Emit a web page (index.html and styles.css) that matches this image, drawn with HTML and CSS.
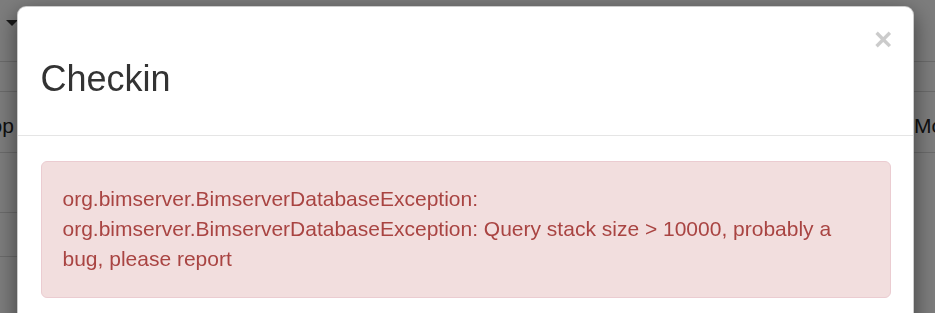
FILE: index.html
```html
<!DOCTYPE html>
<html lang="en">
<head>
  <meta charset="UTF-8" />
  <meta name="viewport" content="width=device-width, initial-scale=1.0"/>
  <title>Checkin - BIMserver</title>
  <link rel="stylesheet" href="styles.css">
</head>
<body>
  <div class="page">
    <div class="topbar">
      <span class="caret"></span>
    </div>
    <div class="subbar"></div>
    <div class="head-row">
      <div class="cell-left">Top</div>
      <div class="cell-right">Modified</div>
    </div>
    <div class="side-rows">
      <div class="side-row"></div>
      <div class="side-row short"></div>
    </div>
  </div>

  <div class="backdrop"></div>

  <div class="modal">
    <div class="modal-header">
      <h3 class="modal-title">Checkin</h3>
      <button class="close" type="button">&times;</button>
    </div>
    <div class="modal-body">
      <div class="alert alert-danger">
        org.bimserver.BimserverDatabaseException: org.bimserver.BimserverDatabaseException: Query stack size &gt; 10000, probably a bug, please report
      </div>
    </div>
  </div>
</body>
</html>
```

FILE: styles.css
```css
html, body {
  margin: 0;
  padding: 0;
  height: 100%;
  overflow: hidden;
}

body {
  font-family: 'Liberation Sans', Arial, sans-serif;
  font-size: 21px;
  line-height: 30px;
  color: #333;
  background-color: #fafafa;
}

/* page under the backdrop */
.topbar {
  height: 61.5px;
  border-bottom: 1.5px solid #d6d6d6;
  padding: 20px 0 0 6px;
  box-sizing: border-box;
}

.caret {
  display: block;
  width: 0;
  height: 0;
  border-top: 6px solid #333;
  border-left: 6px solid transparent;
  border-right: 6px solid transparent;
}

.subbar {
  height: 29.5px;
  border-bottom: 1.5px solid #d6d6d6;
}

.head-row {
  display: flex;
  height: 61px;
  border-bottom: 1.5px solid #d6d6d6;
  padding-top: 19px;
  box-sizing: border-box;
  color: #222;
}

.cell-left {
  flex: 0 0 914px;
  text-indent: -20px;
}

.cell-right {
  flex: 1;
  white-space: nowrap;
}

.side-rows {
  width: 300px;
}

.side-row {
  height: 58.5px;
  border-bottom: 1.5px solid #d6d6d6;
}

.side-row.short {
  height: 43.5px;
}

.backdrop {
  position: fixed;
  inset: 0;
  background-color: rgba(0, 0, 0, 0.5);
}

/* modal */
.modal {
  position: absolute;
  top: 6px;
  left: 17px;
  width: 897px;
  box-sizing: border-box;
  background-color: #fff;
  border: 1.5px solid rgba(0, 0, 0, 0.2);
  border-radius: 9px;
  box-shadow: 0 7.5px 22.5px rgba(0, 0, 0, 0.5);
}

.modal-header {
  display: flex;
  align-items: flex-start;
  padding: 22.5px;
  border-bottom: 1.5px solid #e5e5e5;
}

.modal-title {
  flex: 1;
  margin: 23.5px 0 8.5px;
  font-size: 36px;
  line-height: 51px;
  font-weight: normal;
  color: #333;
}

.close {
  margin: -6px -2px 0 0;
  padding: 0;
  background: transparent;
  border: 0;
  font-family: 'Liberation Sans', Arial, sans-serif;
  font-size: 31.5px;
  font-weight: bold;
  line-height: 1;
  color: #000;
  opacity: 0.2;
  text-shadow: 0 1.5px 0 #fff;
  cursor: pointer;
}

.modal-body {
  padding: 24.5px 22.5px 60px;
}

.alert {
  padding: 22.5px 22.5px 22.5px 21px;
  border: 1.5px solid transparent;
  border-radius: 6px;
}

.alert-danger {
  color: #a94442;
  background-color: #f2dede;
  border-color: #ebccd1;
}
```
